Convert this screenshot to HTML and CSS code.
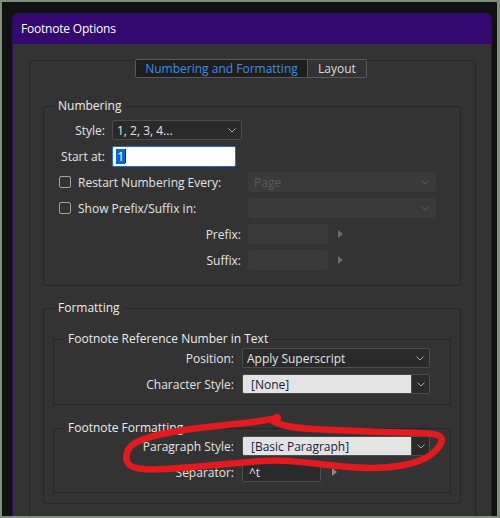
FILE: index.html
```html
<!DOCTYPE html>
<html lang="en">
<head>
<meta charset="utf-8">
<title>Footnote Options</title>
<link rel="stylesheet" href="styles.css">
</head>
<body>
<div class="screen">
  <div class="win">
    <div class="titlebar">Footnote Options</div>
    <div class="content">
      <div class="tabframe">
        <div class="tabs">
          <div class="tab active">Numbering and Formatting</div>
          <div class="tab">Layout</div>
        </div>

        <div class="group numbering">
          <div class="gtitle">Numbering</div>
          <div class="rows">
            <div class="row">
              <span class="lbl lbl-a">Style:</span>
              <div class="select w-style"><span>1, 2, 3, 4...</span><svg class="chev" width="8" height="5" viewBox="0 0 8 5"><polyline points="0.5,0.5 4,4 7.5,0.5"/></svg></div>
            </div>
            <div class="row">
              <span class="lbl lbl-a">Start at:</span>
              <div class="input focus"><span class="sel">1</span><span class="caret"></span></div>
            </div>
            <div class="row">
              <span class="cb"></span>
              <span class="lbl lbl-c">Restart Numbering Every:</span>
              <div class="select disabled w-wide"><span>Page</span><svg class="chev" width="8" height="5" viewBox="0 0 8 5"><polyline points="0.5,0.5 4,4 7.5,0.5"/></svg></div>
            </div>
            <div class="row">
              <span class="cb"></span>
              <span class="lbl lbl-c">Show Prefix/Suffix in:</span>
              <div class="select disabled w-wide"><span></span><svg class="chev" width="8" height="5" viewBox="0 0 8 5"><polyline points="0.5,0.5 4,4 7.5,0.5"/></svg></div>
            </div>
            <div class="row">
              <span class="lbl lbl-p">Prefix:</span>
              <div class="input disabled w-small"></div>
              <span class="tri dim"></span>
            </div>
            <div class="row">
              <span class="lbl lbl-p">Suffix:</span>
              <div class="input disabled w-small"></div>
              <span class="tri dim"></span>
            </div>
          </div>
        </div>

        <div class="group formatting">
          <div class="gtitle">Formatting</div>

          <div class="group sub sub-first">
            <div class="gtitle">Footnote Reference Number in Text</div>
            <div class="rows sub-rows-1">
              <div class="row">
                <span class="lbl lbl-f">Position:</span>
                <div class="select w-wide"><span>Apply Superscript</span><svg class="chev" width="8" height="5" viewBox="0 0 8 5"><polyline points="0.5,0.5 4,4 7.5,0.5"/></svg></div>
              </div>
              <div class="row">
                <span class="lbl lbl-f">Character Style:</span>
                <div class="select light w-wide"><span class="field">[None]</span><span class="drop"><svg class="chev" width="8" height="5" viewBox="0 0 8 5"><polyline points="0.5,0.5 4,4 7.5,0.5"/></svg></span></div>
              </div>
            </div>
          </div>

          <div class="group sub sub-second">
            <div class="gtitle">Footnote Formatting</div>
            <div class="rows sub-rows-2">
              <div class="row">
                <span class="lbl lbl-f">Paragraph Style:</span>
                <div class="select light w-wide"><span class="field">[Basic Paragraph]</span><span class="drop"><svg class="chev" width="8" height="5" viewBox="0 0 8 5"><polyline points="0.5,0.5 4,4 7.5,0.5"/></svg></span></div>
              </div>
              <div class="row">
                <span class="lbl lbl-f">Separator:</span>
                <div class="input dark w-sep">^t</div>
                <span class="tri"></span>
              </div>
            </div>
          </div>
        </div>
      </div>
    </div>
  </div>
</div>

<svg class="annotation" width="500" height="518" viewBox="0 0 500 518">
  <path d="M278,418 L266.5,420 Q255,422 240,423.5 Q225,425 203.5,427.5 Q182,430 165,433.5 Q148,437 139,441 Q130,445 127.5,451.5 Q125,458 127.5,462.5 Q130,467 139,468.5 Q148,470 165,469 Q182,468 198.5,466.5 Q215,465 231.5,463.5 Q248,462 261.5,461 Q275,460 288.5,461 Q302,462 315,463.5 Q328,465 343,466.5 Q358,468 373,468 Q388,468 401.5,465.5 Q415,463 423.5,459 Q432,455 437.5,448.5 Q443,442 441.5,438.5 Q440,435 432.5,434 Q425,433 403.5,432.5 Q382,432 357,431 Q332,430 313.5,429 Q295,428 285,425.5 Q275,423 273.5,421.5 Q272,420 274.5,418.5 L277,417"/>
</svg>
</body>
</html>
```

FILE: styles.css
```css
html, body {
  margin: 0;
  padding: 0;
}

body {
  background: #7d8f7a;
  font-family: "Open Sans", "Noto Sans", sans-serif;
  font-size: 12px;
  color: #e4e4e4;
  width: 500px;
  height: 518px;
  overflow: hidden;
  position: relative;
}

.screen {
  margin: 2px 3px 0 2px;
  height: 514px;
  box-sizing: border-box;
  padding: 11px 5px 0 10px;
  background: #111111;
  overflow: hidden;
}

.win {
  height: 503px;
  background: #333333;
  border-left: 1px solid #2f0d66;
  border-right: 1px solid #2f0d66;
  border-radius: 7px 7px 0 0;
  overflow: hidden;
}

.titlebar {
  height: 31px;
  line-height: 31px;
  padding-left: 8px;
  background: #330870;
  color: #ffffff;
  font-size: 12px;
  letter-spacing: -0.2px;
}

.content {
  padding: 16px 0 0 16px;
}

.tabframe {
  width: 447px;
  height: 520px;
  box-sizing: border-box;
  border: 1px solid #272727;
  border-radius: 3px;
}

.tabs {
  display: flex;
  margin: -2px 0 0 105px;
}

.tab {
  height: 19px;
  box-sizing: border-box;
  border: 1px solid #595959;
  line-height: 17px;
  text-align: center;
  color: #dcdcdc;
  background: #333333;
}

.tab.active {
  width: 173px;
  background: #1e1e1e;
  color: #3b8ee6;
  border-radius: 2px 0 0 2px;
}

.tab + .tab {
  width: 59px;
  border-left: none;
  border-radius: 0 2px 2px 0;
}

.group {
  border: 1px solid #262626;
  border-radius: 3px;
}

.gtitle {
  margin: -9px 0 0 10px;
  padding: 0 4px;
  width: fit-content;
  height: 16px;
  line-height: 16px;
  background: #333333;
  color: #ececec;
}

.numbering {
  width: 418px;
  box-sizing: border-box;
  margin: 28px 0 0 13px;
}

.formatting {
  width: 418px;
  box-sizing: border-box;
  margin: 22px 0 0 13px;
  padding-bottom: 10px;
}

.sub {
  width: 398px;
  box-sizing: border-box;
  margin-left: 9px;
  border-radius: 2px;
}

.sub-first {
  margin-top: 23px;
}

.sub-second {
  margin-top: 23px;
}

.rows {
  display: flex;
  flex-direction: column;
  gap: 6px;
  margin-top: 6px;
  padding-bottom: 15px;
}

.sub-rows-1 {
  margin-top: 1px;
  padding-bottom: 10px;
}

.sub-rows-2 {
  margin-top: 0;
  padding-bottom: 10px;
}

.row {
  display: flex;
  align-items: center;
  height: 20px;
}

.lbl {
  white-space: nowrap;
}

.lbl-a {
  width: 61px;
  text-align: right;
  margin-right: 7px;
}

.lbl-c {
  width: 170px;
}

.lbl-p {
  width: 197px;
  text-align: right;
  margin-right: 7px;
}

.lbl-f {
  width: 180px;
  text-align: right;
  margin-right: 8px;
}

.cb {
  width: 12px;
  height: 12px;
  box-sizing: border-box;
  border: 1px solid #a3a3a3;
  border-radius: 2px;
  margin: 0 7px 0 15px;
}

.select {
  height: 20px;
  box-sizing: border-box;
  border: 1px solid #4c4c4c;
  border-radius: 2px;
  background: #2a2a2a;
  display: flex;
  align-items: center;
  justify-content: space-between;
  padding: 0 5px 0 4px;
  color: #e4e4e4;
  white-space: nowrap;
}

.chev polyline {
  fill: none;
  stroke: #a8a8a8;
  stroke-width: 1;
}

.w-style {
  width: 130px;
}

.w-wide {
  width: 188px;
}

.select.disabled {
  background: #3a3a3a;
  border-color: #3a3a3a;
  color: #5a5a5a;
  padding: 0 6px 0 5px;
}

.select.disabled .chev polyline {
  stroke: #5a5a5a;
}

.select.light {
  padding: 0;
  overflow: hidden;
}

.select.light .field {
  flex: 1;
  height: 100%;
  display: flex;
  align-items: center;
  padding-left: 8px;
  background: #e3e3e3;
  color: #1c1940;
}

.select.light .drop {
  width: 18px;
  height: 100%;
  box-sizing: border-box;
  border-left: 1px solid #4c4c4c;
  display: flex;
  align-items: center;
  justify-content: center;
}

.input {
  height: 20px;
  box-sizing: border-box;
  border-radius: 2px;
  display: flex;
  align-items: center;
}

.input.focus {
  width: 124px;
  height: 21px;
  background: #ffffff;
  border: 1px solid #1f6fd4;
  padding-left: 3px;
  color: #000000;
}

.input.focus .sel {
  background: #0a64d2;
  color: #ffffff;
  font-size: 13px;
  line-height: 15px;
  padding: 0 1px;
}

.input.focus .caret {
  width: 1px;
  height: 14px;
  background: #222222;
}

.input.disabled {
  background: #3a3a3a;
}

.w-small {
  width: 80px;
}

.input.dark {
  background: #2a2a2a;
  border: 1px solid #4c4c4c;
  padding-left: 6px;
  color: #e4e4e4;
}

.w-sep {
  width: 79px;
}

.tri {
  width: 0;
  height: 0;
  margin-left: 11px;
  border-left: 5px solid #8a8a8a;
  border-top: 4px solid transparent;
  border-bottom: 4px solid transparent;
}

.tri.dim {
  border-left-color: #6a6a6a;
  margin-left: 10px;
}

.annotation {
  position: absolute;
  left: 0;
  top: 0;
  pointer-events: none;
}

.annotation path {
  fill: none;
  stroke: #e31b1f;
  stroke-width: 6.5;
  stroke-linecap: round;
  stroke-linejoin: round;
}
```
